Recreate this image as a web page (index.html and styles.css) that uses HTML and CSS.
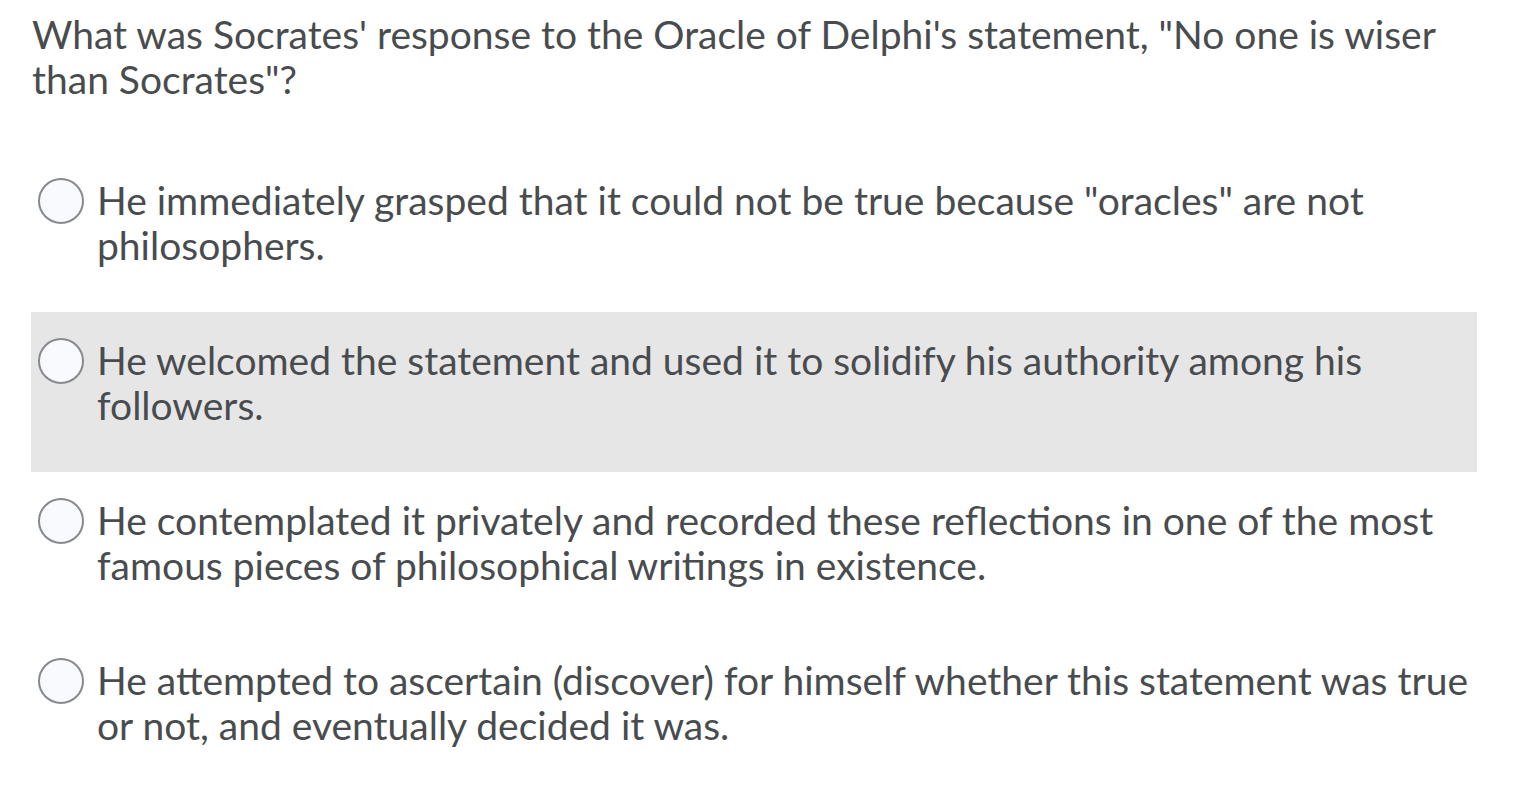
FILE: index.html
```html
<!DOCTYPE html>
<html lang="en">
<head>
<meta charset="utf-8">
<title>Question</title>
<link rel="stylesheet" href="styles.css">
</head>
<body>
<div class="quiz">
  <div class="question">What was Socrates' response to the Oracle of Delphi's statement, "No one is wiser than Socrates"?</div>
  <div class="options">
    <label class="option">
      <span class="radio"></span>
      <span class="text">He immediately grasped that it could not be true because "oracles" are not philosophers.</span>
    </label>
    <label class="option hover">
      <span class="radio"></span>
      <span class="text">He welcomed the statement and used it to solidify his authority among his followers.</span>
    </label>
    <label class="option">
      <span class="radio"></span>
      <span class="text">He contemplated it privately and recorded these reflections in one of the most famous pieces of philosophical writings in existence.</span>
    </label>
    <label class="option">
      <span class="radio"></span>
      <span class="text">He attempted to ascertain (discover) for himself whether this statement was true or not, and eventually decided it was.</span>
    </label>
  </div>
</div>
</body>
</html>
```
FILE: styles.css
```css
html, body {
  margin: 0;
  padding: 0;
  background: #ffffff;
}
body {
  font-family: Lato, "Open Sans", sans-serif;
  color: #494c4e;
  font-size: 39px;
  line-height: 45px;
}
.quiz {
  width: 1446px;
  margin-left: 31px;
}
.question {
  padding: 12px 0 0 1px;
  height: 152px;
  box-sizing: border-box;
}
.options {
  display: flex;
  flex-direction: column;
}
.option {
  display: flex;
  align-items: flex-start;
  height: 160px;
  box-sizing: border-box;
  padding: 26px 0 0 7px;
}
.option.hover {
  background: #e6e6e6;
}
.radio {
  flex: none;
  width: 42px;
  height: 42px;
  border: 2px solid #878a8c;
  border-radius: 50%;
  background: #f9fafe;
  margin-right: 13px;
}
.text {
  flex: 1;
}
```
